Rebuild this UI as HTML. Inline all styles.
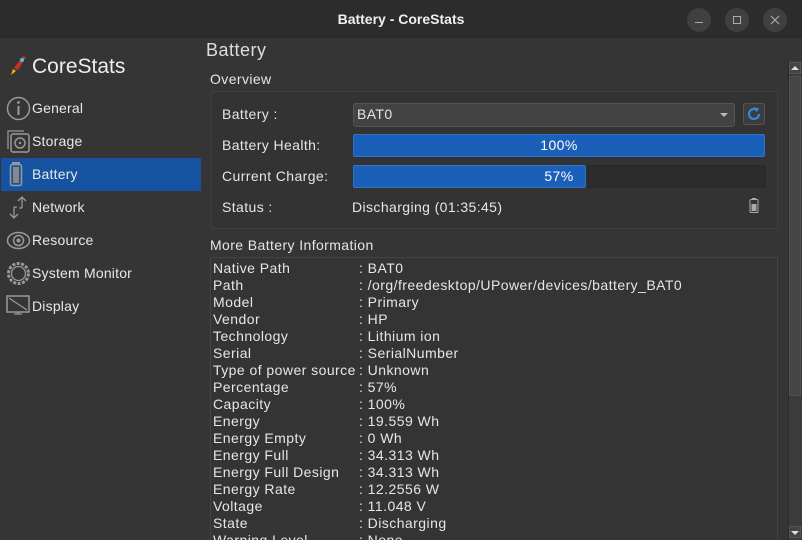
<!DOCTYPE html>
<html><head><style>
*{margin:0;padding:0;box-sizing:border-box}
body{width:802px;height:540px;background:#2a2a2a;font-family:"Liberation Sans",sans-serif;color:#e6e6e6;overflow:hidden;position:relative}
.a{position:absolute;white-space:nowrap}
.win{position:absolute;left:0;top:0;width:802px;height:540px;background:#353535;border-radius:8px 8px 0 0;overflow:hidden}
.tb{position:absolute;left:0;top:0;width:802px;height:38px;background:#2c2c2c;border-bottom:1px solid #252525}
.cb{position:absolute;top:8px;width:24px;height:24px;border-radius:12px;background:#404040}
.nav{font-size:14px;color:#e8e8e8;letter-spacing:0.2px}
.lbl{font-size:14px;letter-spacing:0.4px}
.row{font-size:14px;line-height:17px;letter-spacing:0.45px}
</style></head><body>
<div class="win">
<div class="tb">
<div class="a" style="left:0;width:802px;top:11px;text-align:center;font-weight:bold;font-size:14px;color:#f0f0f0">Battery - CoreStats</div>
<div class="cb" style="left:687px"><div class="a" style="left:8px;top:14px;width:8px;height:1px;background:#aaa"></div></div>
<div class="cb" style="left:725px"><div class="a" style="left:8px;top:8px;width:8px;height:8px;border:1px solid #aaa"></div></div>
<div class="cb" style="left:763px"><svg class="a" style="left:7px;top:7px" width="10" height="10"><path d="M1 1L9 9M9 1L1 9" stroke="#aaa" stroke-width="1.2"/></svg></div>
</div>
<svg class="a" style="left:8px;top:54px" width="20" height="24" viewBox="0 0 20 24"><path d="M15 2 L18 3 L10 16 L6 14 Z" fill="#c8302a"/><circle cx="14" cy="6" r="2" fill="#4cc0f0"/><path d="M5 15 L3 21 L8 17 Z" fill="#f5b400"/></svg>
<div class="a" style="left:32px;top:55px;font-size:21px;color:#eee">CoreStats</div>
<svg class="a" style="left:6px;top:96px" width="25" height="25"><circle cx="12.5" cy="12.5" r="11" fill="none" stroke="#999" stroke-width="1.5"/><rect x="11.5" y="10" width="2" height="9" fill="#999"/><circle cx="12.5" cy="6.5" r="1.4" fill="#999"/></svg>
<div class="a nav" style="left:32px;top:100px">General</div>
<svg class="a" style="left:6px;top:129px" width="25" height="25"><path d="M2 20V2H18" fill="none" stroke="#888" stroke-width="1.5"/><rect x="5" y="5" width="18" height="18" rx="2" fill="none" stroke="#999" stroke-width="1.5"/><circle cx="14" cy="14" r="5" fill="none" stroke="#999" stroke-width="1.5"/><circle cx="14" cy="14" r="1.2" fill="#999"/></svg>
<div class="a nav" style="left:32px;top:133px">Storage</div>
<div class="a" style="left:1px;top:158px;width:200px;height:33px;background:#1553a1"></div>
<svg class="a" style="left:9px;top:161px" width="16" height="27"><rect x="3" y="1" width="8" height="3" fill="#999"/><rect x="1.5" y="3.5" width="11" height="21" rx="2" fill="none" stroke="#999" stroke-width="1.5"/><rect x="4" y="6" width="6" height="16" fill="#888"/></svg>
<div class="a nav" style="left:32px;top:166px">Battery</div>
<svg class="a" style="left:6px;top:195px" width="25" height="25"><path d="M8 12V23M4 19L8 23L12 19M16 13V2M12 6L16 2L20 6M8 12H11M16 13H13" fill="none" stroke="#999" stroke-width="1.3"/></svg>
<div class="a nav" style="left:32px;top:199px">Network</div>
<svg class="a" style="left:6px;top:228px" width="25" height="25"><ellipse cx="12.5" cy="12.5" rx="11" ry="8" fill="none" stroke="#999" stroke-width="1.5"/><circle cx="12.5" cy="12.5" r="5" fill="none" stroke="#999" stroke-width="1.5"/><circle cx="12.5" cy="12.5" r="2" fill="#999"/></svg>
<div class="a nav" style="left:32px;top:232px">Resource</div>
<svg class="a" style="left:6px;top:261px" width="25" height="25"><circle cx="12.5" cy="12.5" r="10" fill="none" stroke="#999" stroke-width="3" stroke-dasharray="3 1.5"/><circle cx="12.5" cy="12.5" r="7" fill="none" stroke="#999" stroke-width="1.3"/></svg>
<div class="a nav" style="left:32px;top:265px">System Monitor</div>
<svg class="a" style="left:6px;top:294px" width="25" height="25"><rect x="1" y="2" width="22" height="16" fill="none" stroke="#999" stroke-width="1.5"/><path d="M3 4L21 16M8 20H16M12 18V20" stroke="#999" stroke-width="1.3"/></svg>
<div class="a nav" style="left:32px;top:298px">Display</div>
<div class="a" style="left:206px;top:40px;font-size:18px;color:#ddd;letter-spacing:0.5px">Battery</div>
<div class="a lbl" style="left:210px;top:71px">Overview</div>
<div class="a" style="left:211px;top:91px;width:567px;height:138px;border:1px solid #3f3f3f;background:#333"></div>
<div class="a lbl" style="left:222px;top:106px">Battery :</div>
<div class="a" style="left:353px;top:103px;width:382px;height:24px;background:#434343;border:1px solid #555;border-radius:3px"></div>
<div class="a lbl" style="left:357px;top:106px">BAT0</div>
<div class="a" style="left:720px;top:113px;width:0;height:0;border-left:4px solid transparent;border-right:4px solid transparent;border-top:4px solid #bbb"></div>
<div class="a" style="left:743px;top:103px;width:22px;height:22px;background:#3c3c3c;border:1px solid #555;border-radius:3px"></div>
<svg class="a" style="left:746px;top:106px" width="16" height="16"><path d="M13 8A5 5 0 1 1 10 3.4" fill="none" stroke="#2d8ae0" stroke-width="2.2"/><path d="M8 1L13 2.5L10.5 6.5Z" fill="#2d8ae0"/></svg>
<div class="a lbl" style="left:222px;top:137px">Battery Health:</div>
<div class="a" style="left:353px;top:134px;width:412px;height:23px;background:#1a5fb8;border:1px solid #2f73c9;border-radius:2px"></div>
<div class="a lbl" style="left:353px;top:137px;width:412px;text-align:center;color:#fff">100%</div>
<div class="a lbl" style="left:222px;top:168px">Current Charge:</div>
<div class="a" style="left:353px;top:165px;width:413px;height:23px;background:#2c2c2c;border:1px solid #292929;border-radius:2px"></div>
<div class="a" style="left:353px;top:165px;width:233px;height:23px;background:#1a5fb8;border:1px solid #2f73c9;border-radius:2px"></div>
<div class="a lbl" style="left:353px;top:168px;width:412px;text-align:center;color:#fff">57%</div>
<div class="a lbl" style="left:222px;top:199px">Status :</div>
<div class="a lbl" style="left:352px;top:199px">Discharging (01:35:45)</div>
<svg class="a" style="left:749px;top:198px" width="10" height="15"><rect x="3" y="0" width="4" height="2" fill="#aaa"/><rect x="1" y="1.5" width="8" height="13" rx="1" fill="none" stroke="#aaa"/><rect x="2.5" y="6" width="5" height="7" fill="#aaa"/></svg>
<div class="a lbl" style="left:210px;top:237px">More Battery Information</div>
<div class="a" style="left:210px;top:257px;width:568px;height:290px;border:1px solid #444;background:#343434"></div>
<div class="a row" style="left:213px;top:260px">Native Path<br>Path<br>Model<br>Vendor<br>Technology<br>Serial<br>Type of power source<br>Percentage<br>Capacity<br>Energy<br>Energy Empty<br>Energy Full<br>Energy Full Design<br>Energy Rate<br>Voltage<br>State<br>Warning Level</div>
<div class="a row" style="left:359px;top:260px">: BAT0<br>: /org/freedesktop/UPower/devices/battery_BAT0<br>: Primary<br>: HP<br>: Lithium ion<br>: SerialNumber<br>: Unknown<br>: 57%<br>: 100%<br>: 19.559 Wh<br>: 0 Wh<br>: 34.313 Wh<br>: 34.313 Wh<br>: 12.2556 W<br>: 11.048 V<br>: Discharging<br>: None</div>
<div class="a" style="left:788px;top:61px;width:14px;height:479px;background:#3b3b3b;border-left:1px solid #2a2a2a"></div>
<div class="a" style="left:789px;top:62px;width:12px;height:12px;background:#444;border:1px solid #555"></div>
<div class="a" style="left:791px;top:66px;border-left:4px solid transparent;border-right:4px solid transparent;border-bottom:4px solid #ddd"></div>
<div class="a" style="left:789px;top:76px;width:12px;height:320px;background:#454545;border:1px solid #505050"></div>
<div class="a" style="left:789px;top:526px;width:12px;height:12px;background:#444;border:1px solid #555"></div>
<div class="a" style="left:791px;top:531px;border-left:4px solid transparent;border-right:4px solid transparent;border-top:4px solid #ddd"></div>
</div>
</body></html>
